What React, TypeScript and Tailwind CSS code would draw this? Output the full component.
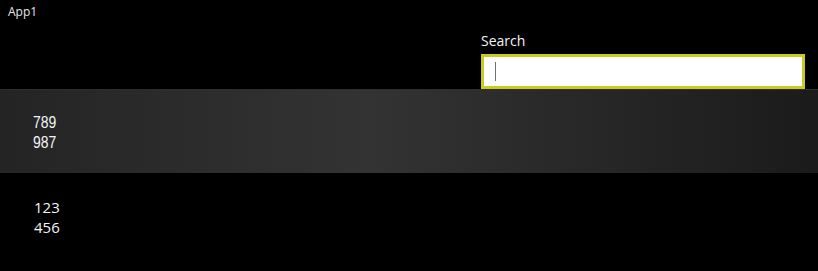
export default function App() {
  return (
    <div className="w-[818px] h-[271px] bg-black text-white overflow-hidden font-['Open_Sans','Noto_Sans',sans-serif]">
      <div className="h-[54px] flex">
        <div className="w-[481px] pl-2 pt-[4px] text-[12px] leading-[16px] text-gray-200">App1</div>
        <div className="flex flex-col">
          <div className="pt-[32px] text-[14px] leading-[18px] text-gray-100">Search</div>
        </div>
      </div>
      <div className="flex">
        <div className="w-[481px]" />
        <div className="w-[324px] h-[35px] border-[3px] border-[#c9cc1e] bg-white flex items-center pl-[11px]">
          <div className="w-px h-[19px] bg-gray-500" />
        </div>
      </div>
      <div className="h-[84px] bg-[linear-gradient(90deg,#242424_0%,#333333_45%,#262626_75%,#1b1b1b_100%)] border-t border-[#2e2e2e] flex flex-col justify-center pl-[33px] pt-[2px] text-[17px] leading-[20px] text-gray-100 font-['Liberation_Sans',sans-serif]">
        <div className="scale-x-[0.82] origin-left">789</div>
        <div className="scale-x-[0.82] origin-left">987</div>
      </div>
      <div className="h-[84px] flex flex-col justify-center pl-[34px] pt-[4px] text-[15px] leading-[20px] text-gray-100">
        <div>123</div>
        <div>456</div>
      </div>
    </div>
  );
}
